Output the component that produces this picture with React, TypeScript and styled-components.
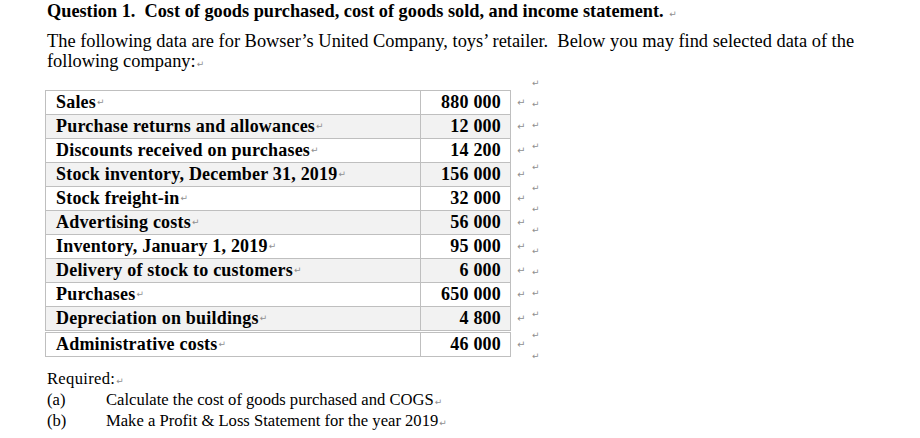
import React from 'react';
import styled, { createGlobalStyle } from 'styled-components';

const GlobalStyle = createGlobalStyle`
  html, body { margin: 0; padding: 0; background: #fff; }
  body {
    font-family: "Liberation Serif", "Times New Roman", serif;
    color: #000;
  }
`;

const Page = styled.div`
  width: 920px;
  height: 438px;
  box-sizing: border-box;
  padding: 1px 0 0 47px;
  overflow: hidden;
`;

const Heading = styled.h1`
  margin: 0;
  font-size: 18.3px;
  line-height: 20px;
  font-weight: bold;
  white-space: pre;
`;

const Intro = styled.p`
  margin: 10px 0 0;
  font-size: 18.4px;
  line-height: 20px;
  white-space: pre;
`;

const Mark = styled.span<{ $size?: number }>`
  font-family: "DejaVu Sans", sans-serif;
  font-size: ${p => p.$size ?? 9}px;
  line-height: 1;
  font-weight: normal;
  letter-spacing: 0;
  color: #8f8f8f;
  margin-left: 1px;
`;

const DataArea = styled.div`
  display: flex;
  align-items: flex-start;
  margin-top: 2px;
`;

const TableBlock = styled.div`
  margin: 17px 0 0 -2px;
`;

const TablePart = styled.div<{ $gap?: boolean }>`
  margin-top: ${p => (p.$gap ? 1 : 0)}px;
`;

const Row = styled.div`
  display: flex;
`;

const Cell = styled.div<{ $shade: boolean; $top: boolean }>`
  box-sizing: border-box;
  height: ${p => (p.$top ? 25 : 24)}px;
  display: flex;
  align-items: center;
  border-bottom: 1px solid #bfbfbf;
  border-top: ${p => (p.$top ? '1px solid #bfbfbf' : 'none')};
  background: ${p => (p.$shade ? '#f2f2f2' : '#fff')};
  font-size: 18px;
  font-weight: bold;
  letter-spacing: 0.2px;
  white-space: pre;
`;

const Label = styled(Cell)`
  width: 376px;
  padding-left: 10px;
  border-left: 1px solid #bfbfbf;
  border-right: 1px solid #bfbfbf;
`;

const Value = styled(Cell)`
  width: 90px;
  justify-content: flex-end;
  padding-right: 9px;
  border-right: 1px solid #bfbfbf;
`;

const RowEnd = styled.div`
  width: 20px;
  padding-left: 5px;
  box-sizing: border-box;
  display: flex;
  align-items: center;
`;

const BlankLines = styled.div`
  display: flex;
  flex-direction: column;
`;

const BlankLine = styled.div`
  height: 21px;
  display: flex;
  align-items: center;
`;

const Required = styled.div`
  font-size: 16.6px;
  line-height: 21px;
  margin-top: 1px;
`;

const RequiredTitle = styled.div`
  letter-spacing: 0.3px;
`;

const Task = styled.div`
  display: grid;
  grid-template-columns: 59px auto;
`;

type Item = { label: string; amount: string };

const firstPart: Item[] = [
  { label: 'Sales', amount: '880 000' },
  { label: 'Purchase returns and allowances', amount: '12 000' },
  { label: 'Discounts received on purchases', amount: '14 200' },
  { label: 'Stock inventory, December 31, 2019', amount: '156 000' },
  { label: 'Stock freight-in', amount: '32 000' },
  { label: 'Advertising costs', amount: '56 000' },
  { label: 'Inventory, January 1, 2019', amount: '95 000' },
  { label: 'Delivery of stock to customers', amount: '6 000' },
  { label: 'Purchases', amount: '650 000' },
  { label: 'Depreciation on buildings', amount: '4 800' },
];

const lastPart: Item[] = [{ label: 'Administrative costs', amount: '46 000' }];

const RETURN = '\u21B5';

const DataRows = ({ items }: { items: Item[] }) => (
  <>
    {items.map((item, i) => {
      const shade = i % 2 === 1;
      const top = i === 0;
      return (
        <Row key={item.label}>
          <Label $shade={shade} $top={top}>
            {item.label}
            <Mark>{RETURN}</Mark>
          </Label>
          <Value $shade={shade} $top={top}>{item.amount}</Value>
          <RowEnd>
            <Mark $size={10}>{RETURN}</Mark>
          </RowEnd>
        </Row>
      );
    })}
  </>
);

const App = () => (
  <Page>
    <GlobalStyle />
    <Heading>
      {'Question 1.  Cost of goods purchased, cost of goods sold, and income statement. '}
      <Mark>{RETURN}</Mark>
    </Heading>
    <Intro>
      {'The following data are for Bowser\u2019s United Company, toys\u2019 retailer.  Below you may find selected data of the'}
      <br />
      {'following company:'}
      <Mark>{RETURN}</Mark>
    </Intro>

    <DataArea>
      <TableBlock>
        <TablePart>
          <DataRows items={firstPart} />
        </TablePart>
        <TablePart $gap>
          <DataRows items={lastPart} />
        </TablePart>
      </TableBlock>
      <BlankLines>
        {Array.from({ length: 14 }, (_, i) => (
          <BlankLine key={i}>
            <Mark>{RETURN}</Mark>
          </BlankLine>
        ))}
      </BlankLines>
    </DataArea>

    <Required>
      <RequiredTitle>
        Required:<Mark>{RETURN}</Mark>
      </RequiredTitle>
      <Task>
        <span>(a)</span>
        <span>
          Calculate the cost of goods purchased and COGS<Mark>{RETURN}</Mark>
        </span>
      </Task>
      <Task>
        <span>(b)</span>
        <span>
          Make a Profit &amp; Loss Statement for the year 2019<Mark>{RETURN}</Mark>
        </span>
      </Task>
    </Required>
  </Page>
);

export default App;
